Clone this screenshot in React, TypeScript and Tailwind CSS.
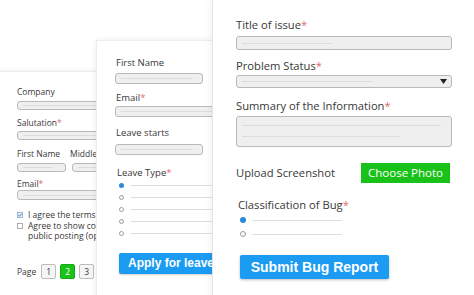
import React from "react";

const Star = () => <span className="text-[#e06a6a]">*</span>;

function Field({ w, h, line, cls = "" }: { w: string; h: string; line: string; cls?: string }) {
  return (
    <div className={`${w} ${h} ${cls} rounded-[3px] border border-[#b9b9b9] bg-[#efefef] flex items-center px-[5px]`}>
      <div className={`${line} h-[1px] bg-[#dcdcdc]`} />
    </div>
  );
}

function Radio({ on, size }: { on?: boolean; size: string }) {
  return on ? (
    <div className={`${size} rounded-full bg-[#2b8ad8]`} />
  ) : (
    <div className={`${size} rounded-full border border-[#9a9a9a] bg-white`} />
  );
}

export default function App() {
  return (
    <div className="relative w-[474px] h-[295px] overflow-hidden bg-white" style={{ fontFamily: '"Open Sans", "DejaVu Sans", sans-serif' }}>
      {/* Back card */}
      <div className="absolute left-[-20px] top-[71px] w-[150px] h-[260px] bg-white border-t border-[#ececec] shadow-[0_0_6px_rgba(0,0,0,0.07)] pl-[37px] pt-[15px] text-[8.5px] leading-[10px] text-[#383838]">
        <div>Company</div>
        <Field w="w-[110px]" h="h-[9px]" line="w-[80px]" cls="mt-[4px]" />
        <div className="mt-[8px]">Salutation<Star /></div>
        <Field w="w-[110px]" h="h-[9px]" line="w-[80px]" cls="mt-[3px]" />
        <div className="mt-[9px] flex gap-[10px]"><span>First Name</span><span>Middle</span></div>
        <div className="mt-[4px] flex gap-[6px]">
          <Field w="w-[49px]" h="h-[9px]" line="w-[30px]" />
          <Field w="w-[49px]" h="h-[9px]" line="w-[30px]" />
        </div>
        <div className="mt-[7px]">Email<Star /></div>
        <Field w="w-[110px]" h="h-[10px]" line="w-[80px]" cls="mt-[1px]" />
        <div className="mt-[10px] flex items-center gap-[5px]">
          <svg width="6" height="6" viewBox="0 0 6 6" className="shrink-0">
            <rect x="0.5" y="0.5" width="5" height="5" fill="#eef3fa" stroke="#8aa7c8" strokeWidth="0.8" />
            <path d="M1.3 3 L2.5 4.2 L4.8 1.6" fill="none" stroke="#2b6fb8" strokeWidth="0.9" />
          </svg>
          <span className="whitespace-nowrap">I agree the terms and conditions</span>
        </div>
        <div className="mt-[1px] flex items-start gap-[5px]">
          <svg width="6" height="6" viewBox="0 0 6 6" className="shrink-0 mt-[2px]">
            <rect x="0.5" y="0.5" width="5" height="5" fill="#fff" stroke="#999" strokeWidth="0.8" />
          </svg>
          <span className="whitespace-nowrap">Agree to show comments<br />public posting (optional)</span>
        </div>
        <div className="mt-[23px] flex items-center gap-[4px]">
          <span className="mr-[1px]">Page</span>
          <div className="w-[15px] h-[15px] rounded-[2px] border border-[#bdbdbd] bg-[#f5f5f5] flex items-center justify-center">1</div>
          <div className="w-[15px] h-[15px] rounded-[2px] border border-[#15a815] bg-[#1ac21a] text-white flex items-center justify-center">2</div>
          <div className="w-[15px] h-[15px] rounded-[2px] border border-[#bdbdbd] bg-[#f5f5f5] flex items-center justify-center">3</div>
        </div>
      </div>

      {/* Middle card */}
      <div className="absolute left-[96px] top-[40px] w-[150px] h-[270px] bg-white border-t border-l border-[#ececec] shadow-[0_0_6px_rgba(0,0,0,0.08)] pl-[19px] pt-[16px] text-[9.5px] leading-[12px] text-[#383838]">
        <div>First Name</div>
        <Field w="w-[88px]" h="h-[11px]" line="w-[72px]" cls="mt-[4px] -ml-[1px]" />
        <div className="mt-[8px]">Email<Star /></div>
        <Field w="w-[130px]" h="h-[11px]" line="w-[110px]" cls="mt-[2px] -ml-[1px]" />
        <div className="mt-[10px]">Leave starts</div>
        <Field w="w-[88px]" h="h-[11px]" line="w-[72px]" cls="mt-[5px] -ml-[1px]" />
        <div className="mt-[12px] ml-[1px]">Leave Type<Star /></div>
        <div className="flex flex-col">
          {[true, false, false, false, false].map((on, i) => (
            <div key={i} className="h-[12px] flex items-center gap-[7px] pl-[3px]">
              <Radio on={on} size="w-[5px] h-[5px]" />
              <div className="w-[100px] h-[1px] bg-[#dedede]" />
            </div>
          ))}
        </div>
        <div className="mt-[14px] ml-[3px] h-[21px] w-[140px] rounded-[2px] bg-[#1c9bf3] shadow-[0_1px_2px_rgba(0,0,0,0.2)] text-white font-bold text-[12px] leading-[21px] pl-[9px] whitespace-nowrap" style={{ fontFamily: '"Liberation Sans", Arial, sans-serif' }}>
          Apply for leave
        </div>
      </div>

      {/* Front card */}
      <div className="absolute left-[212px] top-[-4px] w-[270px] h-[310px] bg-white border-l border-[#e6e6e6] shadow-[0_0_8px_rgba(0,0,0,0.08)] pl-[23px] pt-[22px] text-[11.2px] leading-[14px] text-[#383838]">
        <div>Title of issue<Star /></div>
        <Field w="w-[216px]" h="h-[14px]" line="w-[90px]" cls="mt-[4px]" />
        <div className="mt-[9px]">Problem Status<Star /></div>
        <div className="mt-[2px] w-[216px] h-[13px] rounded-[3px] border border-[#b9b9b9] bg-[#efefef] flex items-center px-[5px]">
          <div className="w-[130px] h-[1px] bg-[#dcdcdc]" />
          <svg width="7" height="5" viewBox="0 0 7 5" className="ml-auto -mr-[1px]"><path d="M0 0 H7 L3.5 5 Z" fill="#222" /></svg>
        </div>
        <div className="mt-[11px]">Summary of the Information<Star /></div>
        <div className="mt-[3px] w-[216px] h-[31px] rounded-[3px] border border-[#b9b9b9] bg-[#efefef] px-[5px] pt-[8px] flex flex-col gap-[10px]">
          <div className="w-[199px] h-[1px] bg-[#dcdcdc]" />
          <div className="w-[158px] h-[1px] bg-[#dcdcdc]" />
        </div>
        <div className="mt-[16px] w-[216px] flex items-center">
          <span>Upload Screenshot</span>
          <div className="ml-auto mr-[2px] w-[89px] h-[20px] bg-[#19c219] text-white text-[11.5px] flex items-center justify-center">Choose Photo</div>
        </div>
        <div className="mt-[15px] ml-[2px]">Classification of Bug<Star /></div>
        <div className="mt-[3px] flex flex-col gap-[4px] ml-[4px]">
          {[true, false].map((on, i) => (
            <div key={i} className="h-[10px] flex items-center gap-[6px]">
              <Radio on={on} size="w-[6px] h-[6px]" />
              <div className="w-[90px] h-[1px] bg-[#dedede]" />
            </div>
          ))}
        </div>
        <div className="mt-[16px] ml-[4px] w-[149px] h-[24px] rounded-[2px] bg-[#1c9bf3] shadow-[0_1px_3px_rgba(0,0,0,0.25)] text-white font-bold text-[14px] flex items-center justify-center" style={{ fontFamily: '"Liberation Sans", Arial, sans-serif' }}>
          Submit Bug Report
        </div>
      </div>
    </div>
  );
}
